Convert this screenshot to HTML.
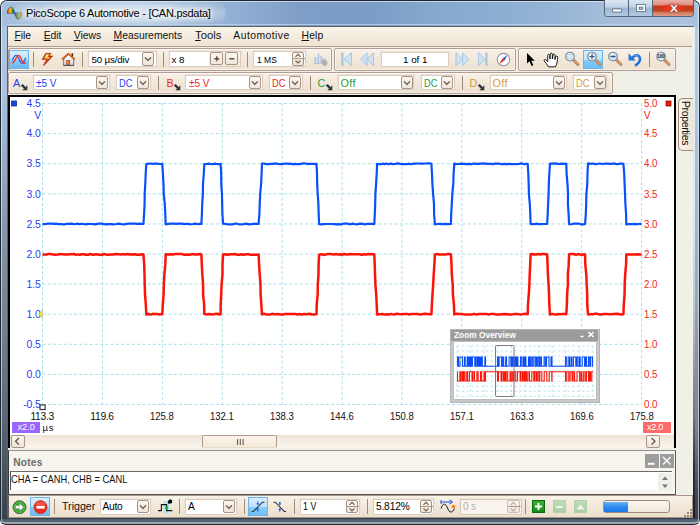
<!DOCTYPE html>
<html><head><meta charset="utf-8"><title>PicoScope 6 Automotive - [CAN.psdata]</title>
<style>
*{box-sizing:border-box;margin:0;padding:0}
html,body{width:700px;height:525px;overflow:hidden;background:#fff}
body{position:relative;font-family:"Liberation Sans",sans-serif;font-size:10.5px;color:#000}
.abs{position:absolute}
#win{position:absolute;left:0;top:0;width:700px;height:525px;border-radius:7px 7px 6px 6px;background:#1e2832;overflow:hidden}
#glass{position:absolute;left:1px;top:1px;width:698px;height:523px;border-radius:6px 6px 5px 5px;
 background:linear-gradient(90deg,#a4bedc 0px,#a9c2de 150px,#93b0d4 230px,#7e9ec7 300px,#7b9cc5 370px,#86a8ce 430px,#8eb0d3 520px,#a2bcd9 600px,#a9c3df 698px);}
#glassl{position:absolute;left:1px;top:26px;width:6px;height:498px;background:linear-gradient(180deg,#aec7e3 0px,#a9c2df 70px,#9ab0cb 120px,#90a3bc 160px,#8493a8 215px,#7a8899 260px,#6e7b8b 320px,#5e6a79 380px,#4e5967 430px,#3f4955 470px,#363f4c 498px)}
#glassr{position:absolute;left:693px;top:26px;width:6px;height:498px;background:linear-gradient(180deg,#b4cbe4 0px,#aac3df 100px,#9fb5d0 200px,#97a9bf 270px,#8894a4 330px,#7a8593 400px,#56616f 440px,#3e4854 470px,#363f4b 498px)}
#glassb{position:absolute;left:1px;top:518px;width:698px;height:6px;background:linear-gradient(180deg,#2a323c 0,#4e5c6c 25%,#5a6a7c 60%,#98a2ae 75%,#2c343e 90%,#1e2630 100%)}
#tbl{position:absolute;left:7px;top:24.200px;width:686px;height:1.300px;background:rgba(190,215,238,.75)}
#hl{position:absolute;left:1px;top:1px;width:698px;height:523px;border-radius:6px 6px 5px 5px;border:1px solid rgba(255,255,255,.55);pointer-events:none}
#title{position:absolute;left:26px;top:5px;font-size:11px;line-height:14px;white-space:nowrap;color:#000;text-shadow:0 0 5px #fff,0 0 6px #fff,0 0 8px #fff,0 0 10px rgba(255,255,255,.9)}
#inner{position:absolute;left:7px;top:26px;width:686.500px;height:492px;background:#f1f0e7;border:1px solid #5f5e60;border-right-color:#8a939e}
/* menu */
#menu{position:absolute;left:8px;top:27px;width:684px;height:19px;background:linear-gradient(180deg,#faf4ea,#f4ebdd 55%,#efe3d1)}
#menu span{position:absolute;top:3px;font-size:10.5px;line-height:13px;white-space:nowrap}
#menu u{text-decoration:underline;text-underline-offset:1px}
.tb{position:absolute;border:1.200px solid #b29c96;border-radius:2px;box-shadow:inset 0 0 0 1px rgba(255,255,255,.5);background:linear-gradient(180deg,#f8f1e7,#f2e8da 50%,#eee1cf)}
.sep{position:absolute;width:1px;background:#9d8c80}
.combo{position:absolute;background:#fff;border:1px solid #d9cdbf;box-shadow:0 0 0 1px #efe6d9}
.combo span{position:absolute;left:3px;top:1px;font-size:10.5px;line-height:13px;white-space:nowrap}
.dd{position:absolute;border:1px solid #a89486;border-radius:2px;background:linear-gradient(180deg,#fbf7f1,#efe5d7)}
.dd svg,.btn svg{position:absolute;left:0;top:0}
.t{position:absolute;white-space:nowrap;line-height:1}
.t u{text-decoration:underline;text-underline-offset:1px;text-decoration-thickness:1px}
#tglow{position:absolute;left:14px;top:2px;width:212px;height:22px;border-radius:11px;background:radial-gradient(ellipse at center,rgba(255,255,255,.62) 0,rgba(255,255,255,.45) 45%,rgba(255,255,255,.15) 75%,rgba(255,255,255,0) 100%)}
.sel{position:absolute;background:linear-gradient(180deg,#d8eefd 0,#bde2fb 50%,#86cbf8 56%,#6ebff6 100%);border:1px solid #6eb2ec}
.btn{position:absolute;border:1px solid #a89486;border-radius:2px;background:linear-gradient(180deg,#fbf7f1,#efe5d7)}
.chl{position:absolute;font-size:12px;line-height:13px}
.ax{position:absolute;font-size:10.5px;line-height:12px;white-space:nowrap}
.axl{color:#2a3cf0;text-align:right;width:30px;left:10px}
.axr{color:#f0281e;left:644px}
.axx{color:#111;text-align:center;width:40px}
</style></head><body>
<div id="win"><div id="glass"></div><div id="glassl"></div><div id="glassr"></div><div id="glassb"></div><div id="hl"></div>
<svg class="abs" style="left:6px;top:5px" width="17" height="16" viewBox="0 0 17 16">
 <defs><linearGradient id="rb" x1="0" x2="1"><stop offset="0" stop-color="#e02010"/><stop offset=".22" stop-color="#f0c020"/><stop offset=".4" stop-color="#30a030"/><stop offset=".55" stop-color="#2040c0"/><stop offset=".72" stop-color="#30a030"/><stop offset=".86" stop-color="#e0a020"/><stop offset="1" stop-color="#d03010"/></linearGradient></defs>
 <path d="M1,8.300 C1.500,2 6,-.5 7.800,5.500 L8.800,7.700 L15.500,7.700 C15.500,13 11.500,18.500 9.300,10.500 L8.300,8.300 Z" fill="url(#rb)" stroke="#4a5070" stroke-width=".6"/><path d="M7.300,5 L9.800,11" stroke="#2838a0" stroke-width="1.400"/>
</svg>
<div id="tbl"></div>
<div id="tglow"></div>
<span class="t" id="t0" style="left:26.1px;top:7.79px;font-size:11px;color:#000;font-weight:normal;letter-spacing:-0.268px;text-shadow:0 0 4px #fff,0 0 6px #fff,0 0 9px #fff">PicoScope 6 Automotive - [CAN.psdata]</span>
<div class="abs" style="left:604px;top:0;width:90px;height:17px;border:1px solid #54677c;border-top:none;border-radius:0 0 4px 4px;overflow:hidden;background:#b8cce2">
 <div class="abs" style="left:0;top:0;width:24px;height:16px;background:linear-gradient(180deg,#dbe6f2 0,#c0d2e5 45%,#9db6d0 50%,#b3c9e0 100%);border-right:1px solid #54677c"></div>
 <div class="abs" style="left:24px;top:0;width:24px;height:16px;background:linear-gradient(180deg,#dbe6f2 0,#c0d2e5 45%,#9db6d0 50%,#b3c9e0 100%);border-right:1px solid #54677c"></div>
 <div class="abs" style="left:48px;top:0;width:41px;height:16px;background:linear-gradient(180deg,#eab0a6 0,#e09084 30%,#c23a1c 38%,#c4401c 68%,#d27a5c 78%,#dc9a88 100%)"></div>
 <div class="abs" style="left:56px;top:3px;width:24px;height:10px;background:radial-gradient(ellipse at center,rgba(255,48,32,.95) 0,rgba(255,48,32,.6) 45%,rgba(255,48,32,0) 75%)"></div>
 <svg class="abs" style="left:0;top:0" width="89" height="16" viewBox="0 0 89 16">
  <rect x="7.500" y="9" width="9" height="3" fill="#fff" stroke="#5a6a7c" stroke-width=".8"/>
  <rect x="31.500" y="4.500" width="9" height="7" fill="#fff" stroke="#5a6a7c" stroke-width=".8"/><rect x="34" y="7" width="4" height="2.500" fill="#9cb4ce" stroke="#5a6a7c" stroke-width=".6"/>
  <path d="M64.500,4.500 l2.600,0 l1.900,2.300 l1.900,-2.300 l2.600,0 l-3.100,3.800 l3.300,4 l-2.700,0 l-2,-2.500 l-2,2.500 l-2.700,0 l3.300,-4 z" fill="#fff" stroke="#6a5a5a" stroke-width=".7"/>
 </svg>
</div>
<div id="inner"></div>
<div class="abs" style="left:693.300px;top:27px;width:1.600px;height:491px;background:linear-gradient(180deg,#e6eef6 0,#dde6f0 200px,#b4bcc6 300px,#6a727c 390px,#2a3038 440px,#1a2026 491px)"></div>
<div id="menu"></div>
<span class="t" id="t1" style="left:14.5px;top:31px;font-size:10.4px;color:#111;font-weight:normal;letter-spacing:-0.037px;"><u>F</u>ile</span>
<span class="t" id="t2" style="left:43.7px;top:31px;font-size:10.4px;color:#111;font-weight:normal;letter-spacing:-0.042px;"><u>E</u>dit</span>
<span class="t" id="t3" style="left:73.7px;top:31px;font-size:10.4px;color:#111;font-weight:normal;letter-spacing:-0.032px;"><u>V</u>iews</span>
<span class="t" id="t4" style="left:113.5px;top:31px;font-size:10.4px;color:#111;font-weight:normal;letter-spacing:-0.007px;"><u>M</u>easurements</span>
<span class="t" id="t5" style="left:194.5px;top:31px;font-size:10.4px;color:#111;font-weight:normal;letter-spacing:0px;transform:scaleX(1.088);transform-origin:0 0;"><u>T</u>ools</span>
<span class="t" id="t6" style="left:233.3px;top:31px;font-size:10.4px;color:#111;font-weight:normal;letter-spacing:0.435px;">Automotive</span>
<span class="t" id="t7" style="left:301.5px;top:31px;font-size:10.4px;color:#111;font-weight:normal;letter-spacing:0.131px;"><u>H</u>elp</span>
<div class="abs" style="left:8px;top:46px;width:684px;height:1px;background:#b09c8e"></div>
<div class="tb" style="left:7.5px;top:47.6px;width:324.7px;height:23.1px;"></div>
<div class="tb" style="left:334.2px;top:47.6px;width:181.8px;height:23.1px;"></div>
<div class="tb" style="left:518.2px;top:47.6px;width:157.8px;height:23.1px;"></div>
<div class="sel" style="left:9px;top:50px;width:20px;height:19px;"></div>
<svg class="abs" style="left:11px;top:52px" width="17" height="16" viewBox="0 0 17 16"><path d="M1.300,8.100 C2.500,5.500 3.800,3.300 5.200,3.300 C7.500,3.300 8.500,11.300 10.700,11.300 C12.500,11.300 13.500,8.500 14.800,5.800" fill="none" stroke="#2f62e6" stroke-width="1.350"/><path d="M1.300,11.300 C3.500,11 5.500,3.500 7.700,3.500 C10,3.500 11,11.300 13,11.300 C13.800,11.300 14.300,10.800 14.800,10.200" fill="none" stroke="#ee3a26" stroke-width="1.500"/><path d="M2,14.300 h13" stroke="#4a9ae8" stroke-width=".9" stroke-dasharray="1 1.600"/></svg>
<div class="sep" style="left:33px;top:52px;height:15px"></div>
<svg class="abs" style="left:41px;top:52px" width="13" height="15" viewBox="0 0 13 15"><path d="M4.600,1.300 L10.200,1.300 L8.300,3.900 L11.900,3.900 L3,13.600 L2.300,13.200 L5.600,7.600 L1,7.600 Z" fill="#bc3410" stroke="#b02c0c" stroke-width=".5" stroke-linejoin="round"/><path d="M5.200,2.300 L8.300,2.300 L6.500,4.900 L9.300,4.900 L6,8.200 L6.800,6.300 L3,6.500 Z" fill="#ffd630"/><path d="M5.400,2.800 L7,2.800 L5,5.600 Z" fill="#fff8d0"/></svg>
<svg class="abs" style="left:61px;top:52px" width="15" height="15" viewBox="0 0 15 15"><defs><linearGradient id="hw" x1="0" y1="0" x2="0" y2="1"><stop offset="0" stop-color="#fff"/><stop offset="1" stop-color="#cfdbe8"/></linearGradient></defs><rect x="10.500" y="1.200" width="1.600" height="4" fill="#4a2418"/><path d="M2.700,7 V13.400 H12.700 V7 L7.500,2.500 Z" fill="url(#hw)" stroke="#566070" stroke-width=".9"/><path d="M2.400,13.500 H13" stroke="#48525e" stroke-width="1.100"/><path d="M.9,7.300 L7.300,1.700 L13.800,7.300" fill="none" stroke="#e06a1c" stroke-width="1.700"/><path d="M.9,7.300 L7.300,1.700 L13.800,7.300" fill="none" stroke="#a82c10" stroke-width=".6" stroke-dasharray="1 1"/><rect x="5.700" y="8.400" width="3.100" height="4.300" fill="#f07818" stroke="#c03410" stroke-width=".6"/></svg>
<div class="sep" style="left:82px;top:52px;height:15px"></div>
<div class="combo" style="left:88px;top:51px;width:68.5px;height:16px;"></div><div class="dd" style="left:142.4px;top:52px;width:12px;height:14px;"><svg width="12" height="14"><path d="M2,4.5 l3,3 l3,-3" fill="none" stroke="#5b4a44" stroke-width="1.2"/></svg></div>
<span class="t" id="t8" style="left:91.5px;top:54.7px;font-size:9.8px;color:#000;font-weight:normal;letter-spacing:-0.19px;">50 &micro;s/div</span>
<div class="sep" style="left:163px;top:52px;height:15px"></div>
<div class="combo" style="left:169px;top:51px;width:72px;height:16px;"></div>
<span class="t" id="t9" style="left:171.5px;top:54.7px;font-size:9.8px;color:#000;font-weight:normal;letter-spacing:-0.089px;">x 8</span>
<div class="abs" style="left:208.5px;top:52px;width:31.7px;height:14px;background:linear-gradient(180deg,#f8f2e8,#f1e7d8)"></div>
<div class="btn" style="left:209.8px;top:52.4px;width:12.8px;height:13.1px;"><svg width="12" height="12"><path d="M3.600,6 h5 M6.100,3.500 v5" stroke="#5e4a46" stroke-width="1.400" fill="none" transform="translate(-.3,-.2)"/></svg></div>
<div class="btn" style="left:225.3px;top:52.4px;width:12.8px;height:13.1px;"><svg width="12" height="12"><path d="M3.600,6 h5" stroke="#5e4a46" stroke-width="1.400" fill="none" transform="translate(-.3,-.2)"/></svg></div>
<div class="sep" style="left:247px;top:52px;height:15px"></div>
<div class="combo" style="left:253px;top:51px;width:53px;height:16px;"></div>
<span class="t" id="t10" style="left:256.5px;top:54.7px;font-size:9.8px;color:#000;font-weight:normal;letter-spacing:0px;transform:scaleX(0.87);transform-origin:0 0;">1 MS</span>
<div class="dd" style="left:292.4px;top:52.4px;width:12px;height:13.2px;"><svg width="12" height="13.2"><path d="M0,5.6 h12" stroke="#a89486" stroke-width="1"/><path d="M2.5,3.9 l2.500,-2.500 l2.500,2.500 M2.5,7.5 l2.500,2.500 l2.500,-2.500" fill="none" stroke="#6b5a54" stroke-width="1.100"/></svg></div>
<svg class="abs" style="left:313px;top:52px" width="16" height="15" viewBox="0 0 16 15"><path d="M1,11.500 h9" stroke="#b8c8d8" stroke-width="1"/><rect x="1.500" y="5" width="1.800" height="6" fill="#a9c9ea"/><rect x="4.500" y="1.500" width="1.800" height="9.500" fill="#a9c9ea"/><rect x="7.500" y="4" width="1.800" height="7" fill="#a9c9ea"/><rect x="10.500" y="6" width="1.800" height="3" fill="#a9c9ea"/><path d="M8,9 l2,-1.500 l1,1 l1.500,-1 l1,1.500 l1,2 l-1,2.500 l-3.500,0 z" fill="#b4aca8" stroke="#c8c0bc" stroke-width=".5"/></svg>
<svg class="abs" style="left:340px;top:52px" width="36" height="15" viewBox="0 0 36 15"><rect x="1.200" y=".5" width="2.300" height="13.500" fill="#a6c8e6"/><path d="M11.500,.8 L4,7.200 L11.500,13.700 Z" fill="#cfe2f3" stroke="#a6c8e6" stroke-width="1"/><path d="M27,.8 L20.500,7.200 L27,13.700 Z M33.500,.8 L27,7.200 L33.500,13.700 Z" fill="#cfe2f3" stroke="#a6c8e6" stroke-width="1"/></svg>
<div class="combo" style="left:381px;top:51.5px;width:67.5px;height:15.5px;"></div>
<span class="t" id="t11" style="left:403.1px;top:54.7px;font-size:9.8px;color:#000;font-weight:normal;letter-spacing:-0.043px;">1 of 1</span>
<svg class="abs" style="left:455px;top:52px" width="36" height="15" viewBox="0 0 36 15"><path d="M1,.8 L7.500,7.200 L1,13.700 Z M7.500,.8 L14,7.200 L7.500,13.700 Z" fill="#cfe2f3" stroke="#a6c8e6" stroke-width="1"/><path d="M23.500,.8 L30,7.200 L23.500,13.700 Z" fill="#cfe2f3" stroke="#a6c8e6" stroke-width="1"/><rect x="30.300" y=".5" width="2.300" height="13.500" fill="#a6c8e6"/></svg>
<svg class="abs" style="left:496px;top:51.500px" width="15" height="15" viewBox="0 0 15 15"><circle cx="7.500" cy="7.500" r="6.200" fill="#fff" stroke="#8e99a6" stroke-width="1.150"/><path d="M11.500,3 L8.600,8.600 L6.400,6.400 Z" fill="#3a58e0"/><path d="M3.300,12 L6.400,6.400 L8.600,8.600 Z" fill="#f02818"/></svg>
<svg class="abs" style="left:526px;top:52px" width="10" height="15" viewBox="0 0 10 15"><path d="M1,1 L1,11.500 L3.500,9.300 L5.500,14 L7.300,13.200 L5.300,8.700 L8.800,8.700 Z" fill="#000"/></svg>
<svg class="abs" style="left:543px;top:51.500px" width="17" height="16" viewBox="0 0 17 16"><path d="M5.500,14.800 C4.500,12.500 2.500,10.500 1.200,9 C.6,8 1.800,7 2.800,7.800 L4.800,9.600 L4.600,3.500 C4.600,2 6.600,2 6.700,3.400 L7,7 L7.200,2.200 C7.300,.8 9.300,.8 9.300,2.200 L9.400,7 L10,2.900 C10.200,1.600 12,1.800 12,3.200 L11.900,7.600 L12.800,4.800 C13.200,3.600 14.800,4 14.700,5.200 C14.500,8 14.200,11.500 12.500,14.800 Z" fill="#fff" stroke="#000" stroke-width=".9" stroke-linejoin="round"/></svg>
<svg class="abs" style="left:564.3px;top:51.4px" width="17" height="16" viewBox="0 0 17 16"><path d="M9.300,8.900 L14,13.500" stroke="#90867e" stroke-width="2.900" stroke-linecap="round"/><path d="M9.800,9.300 L14,13.400" stroke="#f49444" stroke-width="1.500" stroke-linecap="round"/><circle cx="6" cy="5.600" r="4.300" fill="#d8ebfa" stroke="#8593a3" stroke-width="1.300"/><path d="M3.300,4.500 A3,3 0 0 1 6,2.600" fill="none" stroke="#fff" stroke-width="1.100"/><path d="M4,3.500 h3 v3.500 h-3 z" fill="#fff" stroke="#9ab8d8" stroke-width=".6"/></svg>
<div class="sel" style="left:583px;top:50px;width:20px;height:19px;"></div>
<svg class="abs" style="left:586px;top:51.4px" width="17" height="16" viewBox="0 0 17 16"><path d="M9.300,8.900 L14,13.500" stroke="#90867e" stroke-width="2.900" stroke-linecap="round"/><path d="M9.800,9.300 L14,13.400" stroke="#f49444" stroke-width="1.500" stroke-linecap="round"/><circle cx="6" cy="5.600" r="4.300" fill="#d8ebfa" stroke="#8593a3" stroke-width="1.300"/><path d="M3.300,4.500 A3,3 0 0 1 6,2.600" fill="none" stroke="#fff" stroke-width="1.100"/><path d="M3.500,5.500 h5 M6,3 v5" stroke="#33507a" stroke-width="1.200"/></svg>
<svg class="abs" style="left:606.6px;top:51.4px" width="17" height="16" viewBox="0 0 17 16"><path d="M9.300,8.900 L14,13.500" stroke="#90867e" stroke-width="2.900" stroke-linecap="round"/><path d="M9.800,9.300 L14,13.400" stroke="#f49444" stroke-width="1.500" stroke-linecap="round"/><circle cx="6" cy="5.600" r="4.300" fill="#d8ebfa" stroke="#8593a3" stroke-width="1.300"/><path d="M3.300,4.500 A3,3 0 0 1 6,2.600" fill="none" stroke="#fff" stroke-width="1.100"/><path d="M3.500,5.500 h5" stroke="#33507a" stroke-width="1.300"/></svg>
<svg class="abs" style="left:628px;top:52px" width="15" height="15" viewBox="0 0 15 15"><path d="M5,5.200 C6.800,2.600 10,2.600 11.500,4.800 C13.200,7.500 11.200,11.300 7.900,13.200" fill="none" stroke="#1f6fe2" stroke-width="2.500" stroke-linecap="round"/><path d="M.9,1.900 L.9,8.200 L7,8.200 Z" fill="#2a7ae8" stroke="#1c64d0" stroke-width=".5" stroke-linejoin="round"/><path d="M6,3.800 C8,2.600 10,3.200 10.800,4.600" fill="none" stroke="#7ab4f4" stroke-width=".8"/></svg>
<div class="sep" style="left:649px;top:52px;height:15px"></div>
<svg class="abs" style="left:655px;top:51.4px" width="17" height="16" viewBox="0 0 17 16"><path d="M9.300,8.900 L14,13.500" stroke="#90867e" stroke-width="2.900" stroke-linecap="round"/><path d="M9.800,9.300 L14,13.400" stroke="#f49444" stroke-width="1.500" stroke-linecap="round"/><circle cx="6" cy="5.600" r="4.300" fill="#d8ebfa" stroke="#8593a3" stroke-width="1.300"/><path d="M3.300,4.500 A3,3 0 0 1 6,2.600" fill="none" stroke="#fff" stroke-width="1.100"/><text x="6" y="7.300" font-size="4.500" font-weight="bold" text-anchor="middle" font-family="Liberation Sans,sans-serif" fill="#111">100</text></svg>
<div class="tb" style="left:7.5px;top:72.2px;width:605px;height:21.8px;"></div>
<span class="t" id="t12" style="left:13.1px;top:77.56px;font-size:10.8px;color:#2a3cf0;font-weight:normal;letter-spacing:0px;">A</span>
<svg class="abs" style="left:21px;top:83.500px" width="7" height="7" viewBox="0 0 7 7"><path d="M.8,.8 L4,4" stroke="#2c343c" stroke-width="2.300"/><path d="M6.300,1.300 V6.300 H1.300 Z" fill="#2c343c"/></svg>
<div class="combo" style="left:33.2px;top:74.6px;width:76.8px;height:15.6px;"></div><div class="dd" style="left:96px;top:75.6px;width:12px;height:13.6px;"><svg width="12" height="13.6"><path d="M2,4.3 l3,3 l3,-3" fill="none" stroke="#5b4a44" stroke-width="1.2"/></svg></div>
<span class="t" id="t13" style="left:36.1px;top:77.86px;font-size:10.8px;color:#2a3cf0;font-weight:normal;letter-spacing:0px;transform:scaleX(0.926);transform-origin:0 0;">&plusmn;5 V</span>
<div class="combo" style="left:116px;top:74.6px;width:35.4px;height:15.6px;"></div><div class="dd" style="left:137.4px;top:75.6px;width:12px;height:13.6px;"><svg width="12" height="13.6"><path d="M2,4.3 l3,3 l3,-3" fill="none" stroke="#5b4a44" stroke-width="1.2"/></svg></div>
<span class="t" id="t14" style="left:119.1px;top:78.03px;font-size:10.6px;color:#2a3cf0;font-weight:normal;letter-spacing:0px;transform:scaleX(0.869);transform-origin:0 0;">DC</span>
<div class="sep" style="left:157.6px;top:76px;height:14px"></div>
<span class="t" id="t15" style="left:166.5px;top:77.56px;font-size:10.8px;color:#f0281e;font-weight:normal;letter-spacing:0px;">B</span>
<svg class="abs" style="left:173.6px;top:83.500px" width="7" height="7" viewBox="0 0 7 7"><path d="M.8,.8 L4,4" stroke="#2c343c" stroke-width="2.300"/><path d="M6.300,1.300 V6.300 H1.300 Z" fill="#2c343c"/></svg>
<div class="combo" style="left:185px;top:74.6px;width:78px;height:15.6px;"></div><div class="dd" style="left:249px;top:75.6px;width:11.6px;height:13.6px;"><svg width="11.6" height="13.6"><path d="M1.8,4.3 l3,3 l3,-3" fill="none" stroke="#5b4a44" stroke-width="1.2"/></svg></div>
<span class="t" id="t16" style="left:189.1px;top:77.86px;font-size:10.8px;color:#f0281e;font-weight:normal;letter-spacing:0px;transform:scaleX(0.926);transform-origin:0 0;">&plusmn;5 V</span>
<div class="combo" style="left:268.6px;top:74.6px;width:34.8px;height:15.6px;"></div><div class="dd" style="left:289.4px;top:75.6px;width:12px;height:13.6px;"><svg width="12" height="13.6"><path d="M2,4.3 l3,3 l3,-3" fill="none" stroke="#5b4a44" stroke-width="1.2"/></svg></div>
<span class="t" id="t17" style="left:271.5px;top:78.03px;font-size:10.6px;color:#f0281e;font-weight:normal;letter-spacing:0px;transform:scaleX(0.869);transform-origin:0 0;">DC</span>
<div class="sep" style="left:310px;top:76px;height:14px"></div>
<span class="t" id="t18" style="left:317.5px;top:77.56px;font-size:10.8px;color:#2c9a3c;font-weight:normal;letter-spacing:0px;">C</span>
<svg class="abs" style="left:326px;top:83.500px" width="7" height="7" viewBox="0 0 7 7"><path d="M.8,.8 L4,4" stroke="#2c343c" stroke-width="2.300"/><path d="M6.300,1.300 V6.300 H1.300 Z" fill="#2c343c"/></svg>
<div class="combo" style="left:338px;top:74.6px;width:76px;height:15.6px;"></div><div class="dd" style="left:401px;top:75.6px;width:12px;height:13.6px;"><svg width="12" height="13.6"><path d="M2,4.3 l3,3 l3,-3" fill="none" stroke="#5b4a44" stroke-width="1.2"/></svg></div>
<span class="t" id="t19" style="left:340.5px;top:77.86px;font-size:10.8px;color:#2c9a3c;font-weight:normal;letter-spacing:0.348px;">Off</span>
<div class="combo" style="left:421px;top:74.6px;width:34px;height:15.6px;"></div><div class="dd" style="left:441.4px;top:75.6px;width:11.6px;height:13.6px;"><svg width="11.6" height="13.6"><path d="M1.8,4.3 l3,3 l3,-3" fill="none" stroke="#5b4a44" stroke-width="1.2"/></svg></div>
<span class="t" id="t20" style="left:423.9px;top:78.03px;font-size:10.6px;color:#2c9a3c;font-weight:normal;letter-spacing:0px;transform:scaleX(0.869);transform-origin:0 0;">DC</span>
<div class="sep" style="left:462.4px;top:76px;height:14px"></div>
<span class="t" id="t21" style="left:469.5px;top:77.56px;font-size:10.8px;color:#d49a3c;font-weight:normal;letter-spacing:0px;">D</span>
<svg class="abs" style="left:478px;top:83.500px" width="7" height="7" viewBox="0 0 7 7"><path d="M.8,.8 L4,4" stroke="#2c343c" stroke-width="2.300"/><path d="M6.300,1.300 V6.300 H1.300 Z" fill="#2c343c"/></svg>
<div class="combo" style="left:490px;top:74.6px;width:77px;height:15.6px;"></div><div class="dd" style="left:553.4px;top:75.6px;width:12px;height:13.6px;"><svg width="12" height="13.6"><path d="M2,4.3 l3,3 l3,-3" fill="none" stroke="#5b4a44" stroke-width="1.2"/></svg></div>
<span class="t" id="t22" style="left:492.5px;top:77.86px;font-size:10.8px;color:#d49a3c;font-weight:normal;letter-spacing:0.348px;">Off</span>
<div class="combo" style="left:573.2px;top:74.6px;width:34.2px;height:15.6px;"></div><div class="dd" style="left:593.6px;top:75.6px;width:12px;height:13.6px;"><svg width="12" height="13.6"><path d="M2,4.3 l3,3 l3,-3" fill="none" stroke="#5b4a44" stroke-width="1.2"/></svg></div>
<span class="t" id="t23" style="left:575.9px;top:78.03px;font-size:10.6px;color:#d49a3c;font-weight:normal;letter-spacing:0px;transform:scaleX(0.869);transform-origin:0 0;">DC</span>
<div class="abs" style="left:8px;top:94.500px;width:667.500px;height:353.500px;background:#000"></div>
<div class="abs" style="left:10px;top:96.800px;width:663.700px;height:338.200px;background:#fff"></div>
<svg class="abs" style="left:0;top:0" width="700" height="525" viewBox="0 0 700 525">
<g stroke="#a9deea" stroke-width="1" stroke-dasharray="3 2.250" fill="none">
<path d="M42.500,103.6 H641.600"/>
<path d="M42.500,133.69 H641.600"/>
<path d="M42.500,163.78 H641.600"/>
<path d="M42.500,193.87 H641.600"/>
<path d="M42.500,223.96 H641.600"/>
<path d="M42.500,254.05 H641.600"/>
<path d="M42.500,284.14 H641.600"/>
<path d="M42.500,314.23 H641.600"/>
<path d="M42.500,344.32 H641.600"/>
<path d="M42.500,374.41 H641.600"/>
<path d="M42.500,404.5 H641.600"/>
<path d="M42.5,103.200 V404.900"/>
<path d="M102.41,103.200 V404.900"/>
<path d="M162.32,103.200 V404.900"/>
<path d="M222.23,103.200 V404.900"/>
<path d="M282.14,103.200 V404.900"/>
<path d="M342.05,103.200 V404.900"/>
<path d="M401.96,103.200 V404.900"/>
<path d="M461.87,103.200 V404.900"/>
<path d="M521.78,103.200 V404.900"/>
<path d="M581.69,103.200 V404.900"/>
<path d="M641.6,103.200 V404.900"/>
</g>
<polyline points="42.5,223.8 44.2,224.1 45.8,224.0 47.9,223.6 50.1,223.6 52.3,223.6 53.9,223.9 56.7,223.7 58.5,224.1 61.4,224.1 63.5,224.4 65.1,224.3 67.0,223.7 68.7,223.8 71.4,223.7 73.8,224.1 75.9,224.0 77.5,223.6 79.3,224.2 81.4,223.8 83.8,224.0 85.7,224.3 88.3,223.8 90.6,224.0 93.5,224.2 95.4,224.4 97.1,223.9 99.7,223.7 101.9,223.6 104.4,224.2 106.8,224.3 108.8,224.2 111.2,224.1 113.3,224.3 116.3,224.0 118.8,223.6 121.3,224.1 124.3,224.3 126.2,223.9 128.7,223.6 130.9,223.7 132.6,223.6 135.2,223.7 137.1,223.9 139.9,223.6 142.1,224.0 143.4,224.0 144.1,214.0 144.6,203.9 144.7,193.9 145.3,183.9 145.7,173.8 146.3,164.1 149.2,163.5 151.0,163.6 152.9,163.8 155.2,163.6 156.7,163.7 158.8,163.9 161.7,164.0 162.3,163.8 162.9,173.8 163.5,183.9 163.7,193.9 164.8,203.9 165.3,214.0 165.7,224.3 168.4,223.9 170.5,223.6 172.9,223.6 174.5,223.7 176.3,223.9 177.9,223.6 179.6,223.6 181.6,223.6 184.5,224.1 186.2,223.8 188.2,223.9 189.9,224.3 192.9,224.0 195.1,223.6 196.8,223.9 198.6,224.3 200.4,223.6 201.4,224.0 201.9,214.0 202.2,203.9 202.9,193.9 203.0,183.9 203.8,173.8 204.3,164.2 207.1,164.0 209.0,163.7 210.7,164.0 213.0,164.1 215.0,163.6 217.7,164.2 220.5,164.1 220.6,163.8 221.2,173.8 221.3,183.9 221.9,193.9 222.2,203.9 222.4,214.0 223.1,223.6 225.0,223.8 227.6,224.4 229.7,224.4 232.7,224.4 234.8,223.7 236.6,223.7 238.4,224.1 241.3,224.3 243.5,224.1 246.2,223.6 248.7,224.4 251.3,224.2 253.6,223.7 256.2,223.8 258.6,224.0 259.4,214.0 259.7,203.9 260.2,193.9 261.1,183.9 261.6,173.8 262.0,163.5 263.7,163.5 266.5,164.1 268.3,164.1 271.2,163.9 273.3,163.8 275.0,163.4 277.9,163.9 280.2,164.2 282.4,164.1 285.1,163.5 287.0,163.6 288.8,163.9 290.7,163.7 292.4,164.2 294.5,163.8 296.8,164.2 299.0,164.2 301.2,163.8 303.5,163.4 305.7,163.5 307.2,164.1 308.9,163.8 311.5,163.9 313.5,163.8 315.8,164.1 316.5,163.8 317.0,173.8 317.2,183.9 317.7,193.9 318.4,203.9 318.7,214.0 319.1,224.1 321.7,224.4 323.9,224.1 326.2,224.0 328.7,224.0 331.0,224.0 333.9,224.2 336.7,224.4 338.6,224.1 341.5,224.3 343.2,223.7 345.4,223.6 347.3,223.6 349.8,224.3 352.6,223.7 355.2,224.1 356.9,224.3 359.9,223.7 362.8,223.9 365.0,224.4 367.8,223.7 369.9,224.0 371.9,223.7 373.9,224.2 374.3,224.0 374.8,214.0 375.2,203.9 375.4,193.9 376.1,183.9 376.7,173.8 377.1,163.8 378.7,164.2 381.4,164.2 383.0,163.6 384.6,164.1 386.5,163.5 388.6,164.2 391.4,163.6 393.1,164.2 395.4,164.0 397.1,163.4 399.6,163.7 401.2,164.2 403.7,164.1 405.3,164.1 406.9,164.1 409.1,163.7 411.4,164.2 413.3,163.5 415.6,163.6 417.3,163.5 418.8,163.5 420.8,163.6 423.4,163.6 425.7,163.5 427.7,163.4 429.6,163.4 431.4,163.8 432.0,173.8 432.4,183.9 433.1,193.9 434.0,203.9 434.1,214.0 434.9,224.3 437.0,224.0 439.8,223.9 442.1,224.2 445.0,223.9 447.8,224.2 450.2,223.9 450.9,224.0 451.2,214.0 451.8,203.9 452.3,193.9 453.3,183.9 453.6,173.8 454.3,163.5 455.9,164.1 458.7,164.0 460.7,163.6 462.6,163.8 464.3,163.8 466.2,164.2 469.2,163.8 471.1,164.2 473.0,163.7 474.5,163.7 476.7,163.8 478.5,163.8 480.0,163.6 481.7,163.7 483.2,163.4 485.2,163.6 487.6,163.8 490.2,163.9 492.8,164.1 494.9,163.6 497.8,163.5 500.4,163.9 502.0,164.1 504.8,163.9 507.4,164.1 509.1,163.8 511.4,164.1 514.1,164.1 516.5,164.2 519.0,164.0 520.8,163.4 522.5,163.7 524.2,164.1 526.5,163.9 527.7,163.8 528.3,173.8 528.7,183.9 528.9,193.9 529.8,203.9 530.3,214.0 530.6,224.0 532.9,224.1 534.5,224.2 536.4,223.6 538.3,224.2 540.1,224.2 543.0,224.0 545.1,224.0 547.1,224.0 547.7,214.0 548.1,203.9 548.6,193.9 548.8,183.9 549.3,173.8 550.0,163.6 552.6,163.6 555.0,163.4 556.6,163.6 559.1,164.0 561.6,163.6 563.9,163.8 566.1,163.5 566.3,163.8 566.6,173.8 567.5,183.9 568.0,193.9 567.9,203.9 568.6,214.0 569.1,224.3 572.1,224.0 574.0,223.7 576.9,223.7 579.2,223.7 581.5,224.4 583.2,224.3 585.1,224.0 585.8,214.0 586.2,203.9 586.4,193.9 587.3,183.9 587.5,173.8 588.0,163.4 589.5,163.8 591.7,163.6 593.4,163.7 595.4,164.1 596.9,164.0 599.6,163.5 602.5,164.0 605.4,163.6 607.4,163.7 610.4,163.9 612.5,163.7 614.4,163.4 616.0,164.1 618.0,164.2 619.8,163.6 622.1,163.5 623.4,163.8 624.2,173.8 624.6,183.9 625.0,193.9 625.4,203.9 626.1,214.0 626.3,224.4 628.6,224.2 630.2,224.2 632.4,224.2 634.8,223.8 636.4,224.4 638.1,224.0 640.1,223.8 641.6,224.0" fill="none" stroke="#0850fa" stroke-width="2.200" stroke-linejoin="round"/>
<polyline points="42.5,254.8 44.4,254.5 46.3,254.5 48.4,254.1 50.2,254.1 53.0,254.4 54.9,254.8 57.9,254.4 59.6,254.1 61.2,254.3 62.8,254.2 64.7,254.5 67.6,254.6 69.7,254.3 72.0,254.3 74.0,254.0 75.9,254.8 77.6,254.4 80.0,254.7 81.8,254.2 83.7,254.3 85.9,254.8 88.7,254.7 90.2,254.0 92.8,254.8 95.0,254.5 96.5,254.3 99.4,254.7 102.1,254.8 104.0,254.0 105.7,254.4 108.3,254.8 110.9,254.5 113.5,254.4 115.8,254.0 118.5,254.2 121.4,254.5 123.3,254.1 125.2,254.5 127.8,254.1 129.4,254.4 131.7,254.3 133.6,254.5 135.1,254.2 137.3,254.8 139.7,254.7 142.0,254.2 143.4,254.4 144.2,264.4 144.5,274.3 144.7,284.3 145.0,294.3 145.8,304.2 146.3,314.4 148.4,314.0 150.9,314.6 152.8,313.8 154.8,314.1 157.3,313.9 160.0,314.4 162.3,313.9 162.3,314.2 162.8,304.2 163.6,294.3 163.8,284.3 164.4,274.3 165.3,264.4 165.7,254.2 168.6,254.4 170.4,254.2 172.5,254.5 175.5,254.1 177.5,254.1 180.5,254.1 182.1,254.0 184.2,254.8 187.0,254.6 190.0,254.8 192.0,254.1 194.9,254.6 196.4,254.5 198.5,254.3 200.5,254.1 201.4,254.4 201.8,264.4 202.3,274.3 203.1,284.3 203.1,294.3 204.1,304.2 204.3,313.9 206.3,314.5 209.1,314.1 210.6,314.2 212.7,314.6 214.5,314.1 217.3,313.8 219.5,314.5 220.6,314.2 220.7,304.2 221.2,294.3 221.6,284.3 222.5,274.3 222.5,264.4 223.1,254.6 225.9,254.3 227.9,254.8 230.3,254.2 232.9,254.2 234.8,254.0 237.4,254.8 239.9,254.8 241.4,254.2 243.6,254.8 246.5,254.3 248.4,254.3 250.7,254.8 252.4,254.7 255.0,254.7 257.7,254.5 258.6,254.4 259.1,264.4 259.7,274.3 260.5,284.3 260.6,294.3 261.3,304.2 262.0,314.4 263.9,313.8 265.4,314.2 267.4,314.6 270.2,314.6 272.1,313.8 273.8,314.2 276.3,314.2 278.2,314.1 280.6,314.4 283.2,314.5 285.7,313.9 288.5,314.0 290.9,314.1 293.5,313.9 295.3,314.0 297.1,314.5 299.4,314.0 301.5,314.6 303.8,314.0 306.5,314.3 309.5,313.8 311.7,314.5 314.5,314.6 316.0,314.0 316.5,314.2 316.7,304.2 317.7,294.3 317.8,284.3 318.5,274.3 318.6,264.4 319.1,254.7 321.3,254.2 323.9,254.8 325.6,254.5 328.0,254.1 330.1,254.1 331.9,254.2 334.3,254.5 336.1,254.0 338.1,254.6 339.9,254.2 341.7,254.7 344.0,254.0 345.6,254.3 348.0,254.5 349.6,254.1 352.1,254.3 354.1,254.2 357.0,254.2 359.3,254.3 361.5,254.7 364.5,254.3 366.3,254.6 368.1,254.0 370.9,254.3 373.7,254.3 374.3,254.4 374.7,264.4 375.0,274.3 375.4,284.3 376.2,294.3 376.7,304.2 377.1,314.6 378.7,314.3 380.8,314.2 382.5,314.0 384.8,314.6 386.5,314.2 389.2,314.6 391.0,313.9 393.9,314.6 396.1,313.8 399.0,314.1 401.8,314.3 404.6,313.9 407.3,313.9 409.4,314.5 412.1,313.9 413.9,314.1 416.2,314.1 417.9,314.0 420.5,314.6 422.0,314.3 424.7,313.8 427.4,313.9 429.8,314.2 431.4,314.2 431.9,304.2 432.5,294.3 433.2,284.3 433.7,274.3 434.4,264.4 434.9,254.4 437.1,254.0 439.5,254.4 441.3,254.6 444.0,254.4 445.8,254.4 447.4,254.1 449.6,254.0 450.9,254.4 451.5,264.4 451.8,274.3 452.7,284.3 452.9,294.3 453.9,304.2 454.3,314.4 456.6,313.8 458.8,314.1 461.7,313.9 464.5,314.6 467.1,314.5 468.9,314.6 471.2,314.6 474.0,313.9 476.7,314.6 478.3,314.1 481.0,313.9 483.8,314.0 486.5,313.9 488.8,314.6 490.6,314.0 492.8,314.0 494.4,313.9 496.1,314.6 498.7,314.6 500.4,314.5 502.1,314.2 504.5,314.1 507.4,314.2 509.7,314.5 511.4,314.6 513.8,314.1 516.5,314.0 519.5,314.3 521.5,314.4 523.7,313.9 526.3,313.8 527.7,314.2 528.0,304.2 528.8,294.3 529.4,284.3 529.7,274.3 530.2,264.4 530.6,254.2 532.1,254.0 533.8,254.5 536.0,254.4 538.8,254.1 540.7,254.5 542.2,254.0 544.2,254.0 546.3,254.2 547.1,254.4 547.6,264.4 547.9,274.3 548.6,284.3 549.0,294.3 549.3,304.2 550.0,314.6 551.9,313.9 553.5,314.3 556.3,314.5 558.4,314.0 559.9,314.3 562.3,314.1 564.7,314.1 566.3,314.2 566.9,304.2 567.1,294.3 567.9,284.3 567.9,274.3 568.7,264.4 569.1,254.3 571.0,254.0 573.6,254.0 576.0,254.8 577.7,254.1 580.1,254.4 582.5,254.7 584.3,254.2 585.1,254.4 585.3,264.4 586.3,274.3 586.7,284.3 587.2,294.3 587.2,304.2 588.0,314.5 590.6,314.2 593.2,314.2 595.1,313.8 596.9,313.8 598.9,314.4 601.5,314.5 604.0,314.0 606.4,314.1 609.0,314.2 610.9,314.3 613.9,313.9 616.7,313.8 618.6,314.0 621.2,314.6 623.4,314.2 623.8,304.2 624.6,294.3 624.7,284.3 625.2,274.3 626.1,264.4 626.3,254.5 628.8,254.5 631.8,254.4 634.6,254.6 637.4,254.3 639.9,254.5 641.6,254.4" fill="none" stroke="#fb1408" stroke-width="2.500" stroke-linejoin="round"/>

<rect x="40" y="404.900" width="5.100" height="4.600" fill="#fff" stroke="#3a3a3a" stroke-width="1.200"/>
<rect x="11.500" y="101" width="5" height="5" fill="#1848e8" stroke="#0a2890" stroke-width=".8"/>
<rect x="666" y="101" width="5" height="5" fill="#f01808" stroke="#900a04" stroke-width=".8"/>
</svg>
<span class="t" id="t24" style="left:26.5px;top:99.3px;font-size:10.4px;color:#2a3cf0;font-weight:normal;letter-spacing:-0.127px;">4.5</span>
<span class="t" id="t25" style="left:643.8px;top:99.3px;font-size:10.4px;color:#f0281e;font-weight:normal;letter-spacing:0px;transform:scaleX(0.934);transform-origin:0 0;">5.0</span>
<span class="t" id="t26" style="left:26.5px;top:129.39px;font-size:10.4px;color:#2a3cf0;font-weight:normal;letter-spacing:-0.127px;">4.0</span>
<span class="t" id="t27" style="left:643.8px;top:129.39px;font-size:10.4px;color:#f0281e;font-weight:normal;letter-spacing:0px;transform:scaleX(0.934);transform-origin:0 0;">4.5</span>
<span class="t" id="t28" style="left:26.5px;top:159.48px;font-size:10.4px;color:#2a3cf0;font-weight:normal;letter-spacing:-0.127px;">3.5</span>
<span class="t" id="t29" style="left:643.8px;top:159.48px;font-size:10.4px;color:#f0281e;font-weight:normal;letter-spacing:0px;transform:scaleX(0.934);transform-origin:0 0;">4.0</span>
<span class="t" id="t30" style="left:26.5px;top:189.57px;font-size:10.4px;color:#2a3cf0;font-weight:normal;letter-spacing:-0.127px;">3.0</span>
<span class="t" id="t31" style="left:643.8px;top:189.57px;font-size:10.4px;color:#f0281e;font-weight:normal;letter-spacing:0px;transform:scaleX(0.934);transform-origin:0 0;">3.5</span>
<span class="t" id="t32" style="left:26.5px;top:219.66px;font-size:10.4px;color:#2a3cf0;font-weight:normal;letter-spacing:-0.127px;">2.5</span>
<span class="t" id="t33" style="left:643.8px;top:219.66px;font-size:10.4px;color:#f0281e;font-weight:normal;letter-spacing:0px;transform:scaleX(0.934);transform-origin:0 0;">3.0</span>
<span class="t" id="t34" style="left:26.5px;top:249.75px;font-size:10.4px;color:#2a3cf0;font-weight:normal;letter-spacing:-0.127px;">2.0</span>
<span class="t" id="t35" style="left:643.8px;top:249.75px;font-size:10.4px;color:#f0281e;font-weight:normal;letter-spacing:0px;transform:scaleX(0.934);transform-origin:0 0;">2.5</span>
<span class="t" id="t36" style="left:26.5px;top:279.84px;font-size:10.4px;color:#2a3cf0;font-weight:normal;letter-spacing:-0.127px;">1.5</span>
<span class="t" id="t37" style="left:643.8px;top:279.84px;font-size:10.4px;color:#f0281e;font-weight:normal;letter-spacing:0px;transform:scaleX(0.934);transform-origin:0 0;">2.0</span>
<span class="t" id="t38" style="left:26.5px;top:309.93px;font-size:10.4px;color:#2a3cf0;font-weight:normal;letter-spacing:-0.127px;">1.0</span>
<span class="t" id="t39" style="left:643.8px;top:309.93px;font-size:10.4px;color:#f0281e;font-weight:normal;letter-spacing:0px;transform:scaleX(0.934);transform-origin:0 0;">1.5</span>
<span class="t" id="t40" style="left:26.5px;top:340.02px;font-size:10.4px;color:#2a3cf0;font-weight:normal;letter-spacing:-0.127px;">0.5</span>
<span class="t" id="t41" style="left:643.8px;top:340.02px;font-size:10.4px;color:#f0281e;font-weight:normal;letter-spacing:0px;transform:scaleX(0.934);transform-origin:0 0;">1.0</span>
<span class="t" id="t42" style="left:26.5px;top:370.11px;font-size:10.4px;color:#2a3cf0;font-weight:normal;letter-spacing:-0.127px;">0.0</span>
<span class="t" id="t43" style="left:643.8px;top:370.11px;font-size:10.4px;color:#f0281e;font-weight:normal;letter-spacing:0px;transform:scaleX(0.934);transform-origin:0 0;">0.5</span>
<span class="t" id="t44" style="left:23.2px;top:400.2px;font-size:10.4px;color:#2a3cf0;font-weight:normal;letter-spacing:-0.135px;">-0.5</span>
<span class="t" id="t45" style="left:643.8px;top:400.2px;font-size:10.4px;color:#f0281e;font-weight:normal;letter-spacing:0px;transform:scaleX(0.934);transform-origin:0 0;">0.0</span>
<svg class="abs" style="left:37px;top:308px" width="8" height="12" viewBox="0 0 8 12"><path d="M1.600,6.300 L5.200,2.300 L5.200,10.300 Z" fill="#f6ea14" stroke="#a8a470" stroke-width=".5"/></svg>
<span class="t" id="t46" style="left:34.3px;top:110.8px;font-size:10.4px;color:#2a3cf0;font-weight:normal;letter-spacing:0px;">V</span>
<span class="t" id="t47" style="left:643.8px;top:110.8px;font-size:10.4px;color:#f0281e;font-weight:normal;letter-spacing:0px;">V</span>
<span class="t" id="t48" style="left:30.4px;top:411.88px;font-size:10.3px;color:#111;font-weight:normal;letter-spacing:-0.304px;">113.3</span>
<span class="t" id="t49" style="left:90.31px;top:411.88px;font-size:10.3px;color:#111;font-weight:normal;letter-spacing:-0.304px;">119.6</span>
<span class="t" id="t50" style="left:150.22px;top:411.88px;font-size:10.3px;color:#111;font-weight:normal;letter-spacing:0px;transform:scaleX(0.923);transform-origin:0 0;">125.8</span>
<span class="t" id="t51" style="left:210.13px;top:411.88px;font-size:10.3px;color:#111;font-weight:normal;letter-spacing:0px;transform:scaleX(0.923);transform-origin:0 0;">132.1</span>
<span class="t" id="t52" style="left:270.04px;top:411.88px;font-size:10.3px;color:#111;font-weight:normal;letter-spacing:0px;transform:scaleX(0.923);transform-origin:0 0;">138.3</span>
<span class="t" id="t53" style="left:329.95px;top:411.88px;font-size:10.3px;color:#111;font-weight:normal;letter-spacing:0px;transform:scaleX(0.923);transform-origin:0 0;">144.6</span>
<span class="t" id="t54" style="left:389.86px;top:411.88px;font-size:10.3px;color:#111;font-weight:normal;letter-spacing:0px;transform:scaleX(0.923);transform-origin:0 0;">150.8</span>
<span class="t" id="t55" style="left:449.77px;top:411.88px;font-size:10.3px;color:#111;font-weight:normal;letter-spacing:0px;transform:scaleX(0.923);transform-origin:0 0;">157.1</span>
<span class="t" id="t56" style="left:509.68px;top:411.88px;font-size:10.3px;color:#111;font-weight:normal;letter-spacing:0px;transform:scaleX(0.923);transform-origin:0 0;">163.3</span>
<span class="t" id="t57" style="left:569.59px;top:411.88px;font-size:10.3px;color:#111;font-weight:normal;letter-spacing:0px;transform:scaleX(0.923);transform-origin:0 0;">169.6</span>
<span class="t" id="t58" style="left:629.5px;top:411.88px;font-size:10.3px;color:#111;font-weight:normal;letter-spacing:0px;transform:scaleX(0.923);transform-origin:0 0;">175.8</span>
<div class="abs" style="left:11.5px;top:421.5px;width:28.5px;height:11px;background:#9966ff"></div>
<span class="t" id="t59" style="left:17.5px;top:422.71px;font-size:9.2px;color:#fff;font-weight:normal;letter-spacing:0.008px;">x2.0</span>
<span class="t" id="t60" style="left:42.5px;top:422.56px;font-size:9.5px;color:#111;font-weight:normal;letter-spacing:0.666px;">&micro;s</span>
<div class="abs" style="left:642.5px;top:421.5px;width:28px;height:11px;background:#ff6a6a"></div>
<span class="t" id="t61" style="left:647px;top:422.71px;font-size:9.2px;color:#fff;font-weight:normal;letter-spacing:-0.325px;">x2.0</span>
<div class="abs" style="left:10px;top:435px;width:663.700px;height:13px;background:linear-gradient(180deg,#ece2d2,#f3ebdf 35%,#f9f5ee)"></div>
<div class="btn" style="left:11px;top:435px;width:13.5px;height:13px;"><svg width="12" height="11"><path d="M7,2 L3.500,5.300 L7,8.600" fill="none" stroke="#5b4a44" stroke-width="1.200"/></svg></div>
<div class="btn" style="left:646px;top:435px;width:13.5px;height:13px;"><svg width="12" height="11"><path d="M4.500,2 L8,5.300 L4.500,8.600" fill="none" stroke="#5b4a44" stroke-width="1.200"/></svg></div>
<div class="btn" style="left:202px;top:434.8px;width:75px;height:13.2px;border-color:#b09a8e;border-bottom-color:#e6dacb;background:linear-gradient(180deg,#f9f4ec,#f3e9da)"><svg width="74" height="12"><path d="M34.500,3 v6 M37.300,3 v6 M40.100,3 v6" stroke="#6a5a56" stroke-width="1.100"/></svg></div>
<div class="abs" style="left:449.500px;top:328.500px;width:150px;height:74.500px;background:#c9c9c9;border:1px solid #b4b4b4"></div>
<div class="abs" style="left:451px;top:330px;width:147px;height:10.500px;background:#9c9c9c"></div>
<span class="t" id="t62" style="left:453.5px;top:330.98px;font-size:9px;color:#fff;font-weight:bold;letter-spacing:0px;transform:scaleX(0.923);transform-origin:0 0;">Zoom Overview</span>
<div class="abs" style="left:452.500px;top:340.500px;width:144px;height:59.500px;background:#fff;border:1px solid #bdbdbd"></div>
<svg class="abs" style="left:0;top:0" width="700" height="525" viewBox="0 0 700 525">
<g stroke="#b6e3ee" stroke-width=".9" stroke-dasharray="2.500 2.300" fill="none">
<path d="M457,345.9 H593"/>
<path d="M457,350.95 H593"/>
<path d="M457,356 H593"/>
<path d="M457,361.05 H593"/>
<path d="M457,366.1 H593"/>
<path d="M457,371.15 H593"/>
<path d="M457,376.2 H593"/>
<path d="M457,381.25 H593"/>
<path d="M457,386.3 H593"/>
<path d="M457,391.35 H593"/>
<path d="M457,396.4 H593"/>
<path d="M457,346 V396.500"/>
<path d="M470.6,346 V396.500"/>
<path d="M484.2,346 V396.500"/>
<path d="M497.8,346 V396.500"/>
<path d="M511.4,346 V396.500"/>
<path d="M525,346 V396.500"/>
<path d="M538.6,346 V396.500"/>
<path d="M552.2,346 V396.500"/>
<path d="M565.8,346 V396.500"/>
<path d="M579.4,346 V396.500"/>
<path d="M593,346 V396.500"/>
</g>
<polyline points="457.5,366.3 457.5,366.3 457.5,357.0 458.5,357.0 458.5,366.3 460.0,366.3 460.0,357.0 462.4,357.0 462.4,366.3 464.4,366.3 464.4,357.0 465.2,357.0 465.2,366.3 467.2,366.3 467.2,357.0 468.2,357.0 468.2,366.3 469.2,366.3 469.2,357.0 470.0,357.0 470.0,366.3 470.8,366.3 470.8,357.0 471.6,357.0 471.6,366.3 472.4,366.3 472.4,357.0 474.8,357.0 474.8,366.3 475.8,366.3 475.8,357.0 477.1,357.0 477.1,366.3 478.1,366.3 478.1,357.0 478.9,357.0 478.9,366.3 479.7,366.3 479.7,357.0 480.5,357.0 480.5,366.3 481.5,366.3 481.5,357.0 482.3,357.0 482.3,366.3 484.9,366.3 484.9,357.0 485.5,357.0 485.5,366.3 497.5,366.3 497.5,357.0 498.3,357.0 498.3,366.3 499.1,366.3 499.1,357.0 501.5,357.0 501.5,366.3 502.7,366.3 502.7,357.0 503.7,357.0 503.7,366.3 505.7,366.3 505.7,357.0 506.5,357.0 506.5,366.3 509.1,366.3 509.1,357.0 510.9,357.0 510.9,366.3 511.7,366.3 511.7,357.0 512.7,357.0 512.7,366.3 513.7,366.3 513.7,357.0 514.7,357.0 514.7,366.3 515.5,366.3 515.5,357.0 516.3,357.0 516.3,366.3 517.1,366.3 517.1,357.0 517.9,357.0 517.9,366.3 520.5,366.3 520.5,357.0 521.8,357.0 521.8,366.3 523.3,366.3 523.3,357.0 524.1,357.0 524.1,366.3 525.1,366.3 525.1,357.0 525.9,357.0 525.9,366.3 528.5,366.3 528.5,357.0 529.5,357.0 529.5,366.3 530.7,366.3 530.7,357.0 532.0,357.0 532.0,366.3 533.2,366.3 533.2,357.0 535.0,357.0 535.0,366.3 536.2,366.3 536.2,357.0 537.0,357.0 537.0,366.3 538.2,366.3 538.2,357.0 539.5,357.0 539.5,366.3 540.7,366.3 540.7,357.0 541.5,357.0 541.5,366.3 544.1,366.3 544.1,357.0 545.4,357.0 545.4,366.3 546.6,366.3 546.6,357.0 549.0,357.0 549.0,366.3 551.0,366.3 551.0,357.0 552.0,357.0 552.0,366.3 565.5,366.3 565.5,357.0 566.8,357.0 566.8,366.3 568.8,366.3 568.8,357.0 569.6,357.0 569.6,366.3 571.1,366.3 571.1,357.0 571.9,357.0 571.9,366.3 573.4,366.3 573.4,357.0 575.8,357.0 575.8,366.3 576.6,366.3 576.6,357.0 577.9,357.0 577.9,366.3 579.4,366.3 579.4,357.0 580.2,357.0 580.2,366.3 582.2,366.3 582.2,357.0 584.6,357.0 584.6,366.3 585.6,366.3 585.6,357.0 586.4,357.0 586.4,366.3 588.4,366.3 588.4,357.0 589.7,357.0 589.7,366.3 590.7,366.3 590.7,357.0 592.5,357.0 592.5,366.3 593.0,366.3 593.0,366.3 593.0,366.3" fill="none" stroke="#0a4cf5" stroke-width="1.100"/>
<polyline points="457.5,371.8 457.5,371.8 457.5,381.0 459.9,381.0 459.9,371.8 460.9,371.8 460.9,381.0 462.2,381.0 462.2,371.8 463.0,371.8 463.0,381.0 463.8,381.0 463.8,371.8 465.0,371.8 465.0,381.0 466.8,381.0 466.8,371.8 467.6,371.8 467.6,381.0 469.4,381.0 469.4,371.8 472.0,371.8 472.0,381.0 473.0,381.0 473.0,371.8 474.5,371.8 474.5,381.0 476.9,381.0 476.9,371.8 478.1,371.8 478.1,381.0 480.5,381.0 480.5,371.8 481.7,371.8 481.7,381.0 484.1,381.0 484.1,371.8 485.1,371.8 485.1,381.0 485.5,381.0 485.5,371.8 497.5,371.8 497.5,381.0 498.5,381.0 498.5,371.8 501.1,371.8 501.1,381.0 502.1,381.0 502.1,371.8 503.6,371.8 503.6,381.0 504.6,381.0 504.6,371.8 505.4,371.8 505.4,381.0 506.2,381.0 506.2,371.8 507.7,371.8 507.7,381.0 510.1,381.0 510.1,371.8 510.9,371.8 510.9,381.0 512.2,381.0 512.2,371.8 513.4,371.8 513.4,381.0 514.2,381.0 514.2,371.8 515.7,371.8 515.7,381.0 517.5,381.0 517.5,371.8 520.1,371.8 520.1,381.0 520.9,381.0 520.9,371.8 522.4,371.8 522.4,381.0 523.2,381.0 523.2,371.8 524.4,371.8 524.4,381.0 525.4,381.0 525.4,371.8 526.6,371.8 526.6,381.0 527.9,381.0 527.9,371.8 529.4,371.8 529.4,381.0 531.8,381.0 531.8,371.8 533.8,371.8 533.8,381.0 534.8,381.0 534.8,371.8 536.3,371.8 536.3,381.0 537.3,381.0 537.3,371.8 538.8,371.8 538.8,381.0 539.8,381.0 539.8,371.8 541.8,371.8 541.8,381.0 544.2,381.0 544.2,371.8 546.8,371.8 546.8,381.0 549.2,381.0 549.2,371.8 551.8,371.8 551.8,381.0 552.0,381.0 552.0,371.8 565.5,371.8 565.5,381.0 566.8,381.0 566.8,371.8 568.8,371.8 568.8,381.0 570.1,381.0 570.1,371.8 572.1,371.8 572.1,381.0 573.1,381.0 573.1,371.8 574.6,371.8 574.6,381.0 577.0,381.0 577.0,371.8 579.6,371.8 579.6,381.0 580.9,381.0 580.9,371.8 581.9,371.8 581.9,381.0 583.7,381.0 583.7,371.8 585.2,371.8 585.2,381.0 586.5,381.0 586.5,371.8 588.5,371.8 588.5,381.0 589.5,381.0 589.5,371.8 590.5,371.8 590.5,381.0 591.8,381.0 591.8,371.8 593.0,371.8 593.0,371.8 593.0,371.8" fill="none" stroke="#fb1408" stroke-width="1.100"/>
<rect x="495.500" y="345.500" width="18.500" height="51" fill="none" stroke="#7c7c7c" stroke-width="1" rx="1"/>
<path d="M459.500,358.500 l3,1.500 l-3,1.500 z" fill="#f0e020"/>
<path d="M580.500,336.500 h3" stroke="#fff" stroke-width="1.500"/><path d="M588.500,332 l5,5 M593.500,332 l-5,5" stroke="#fff" stroke-width="1.500"/>
</svg>
<div class="abs" style="left:678px;top:97.500px;width:15px;height:53px;border:1px solid #a08a7c;border-right:none;border-radius:5px 0 0 5px;background:linear-gradient(90deg,#f9f4ec,#efe4d3)"></div>
<span class="t" id="t63" style="left:100.5px;top:-8.8px;font-size:10.4px;color:#111;font-weight:normal;letter-spacing:-0.318px;writing-mode:vertical-rl;left:680px;top:101px;line-height:10.400px">Properties</span>
<div class="abs" style="left:7.500px;top:450px;width:668.700px;height:44.800px;background:#f6f4ec;border:1.800px solid #5c5c5c;border-top:1.600px solid #909090;border-left:1.600px solid #3a3a3a;border-bottom-color:#555"></div>
<span class="t" id="t64" style="left:13.3px;top:457.57px;font-size:10.2px;color:#6c6c6c;font-weight:bold;letter-spacing:0.197px;">Notes</span>
<div class="abs" style="left:645px;top:454.3px;width:13.6px;height:13.7px;background:#9c9c9c"><svg width="14" height="14"><path d="M3,9.800 h6.500" stroke="#fff" stroke-width="2"/></svg></div>
<div class="abs" style="left:660px;top:454.3px;width:13.6px;height:13.7px;background:#9c9c9c"><svg width="14" height="14"><path d="M3,3 l7.500,7.500 M10.500,3 l-7.500,7.500" stroke="#fff" stroke-width="1.400"/></svg></div>
<div class="abs" style="left:9.700px;top:470.700px;width:662.300px;height:19.300px;background:#fff;border-top:1.900px solid #6a6a6a;border-left:1.600px solid #505050"></div>
<span class="t" id="t65" style="left:10.9px;top:474.23px;font-size:10.6px;color:#111;font-weight:normal;letter-spacing:0px;transform:scaleX(0.879);transform-origin:0 0;">CHA = CANH, CHB = CANL</span>
<div class="abs" style="left:658px;top:472.6px;width:14px;height:17.4px;background:#efeeea"><svg width="14" height="18"><path d="M4,7 l3,-3.500 l3,3.500 z M4,11.500 l3,3.500 l3,-3.500 z" fill="#7a7672"/></svg></div>
<div class="abs" style="left:7.500px;top:495px;width:685.500px;height:22.800px;background:linear-gradient(180deg,#f8f2e8,#f2e8da 50%,#ebdfcc);border:1px solid #a8948a;border-left-color:#6a5e58"></div>
<svg class="abs" style="left:11.500px;top:499.500px" width="15" height="15" viewBox="0 0 15 15"><circle cx="7.500" cy="7.200" r="6.500" fill="#2fa32c" stroke="#4a6a48" stroke-width="1"/><circle cx="7.500" cy="7.200" r="5" fill="none" stroke="#60c058" stroke-width="1"/><path d="M3.500,5.600 H7.500 V3.300 L11.800,7.200 L7.500,11.100 V8.800 H3.500 Z" fill="#f4f4f4" stroke="#888" stroke-width=".5"/></svg>
<div class="sel" style="left:29.5px;top:497px;width:20.5px;height:19px;"></div>
<svg class="abs" style="left:32.500px;top:499.500px" width="15" height="15" viewBox="0 0 15 15"><circle cx="7.500" cy="7.200" r="6.600" fill="#ee2a1c" stroke="#c03020" stroke-width=".6"/><ellipse cx="7.500" cy="4.300" rx="4.500" ry="2.500" fill="#ff6a58" opacity=".7"/><rect x="3.300" y="6" width="8.400" height="2.600" fill="#fff"/></svg>
<div class="sep" style="left:54px;top:499px;height:15px"></div>
<span class="t" id="t66" style="left:61.5px;top:500.55px;font-size:11.4px;color:#111;font-weight:normal;letter-spacing:0px;transform:scaleX(0.934);transform-origin:0 0;">Trigger</span>
<div class="combo" style="left:100px;top:498.5px;width:51px;height:16px;"></div><div class="dd" style="left:137.4px;top:499.6px;width:12px;height:13.9px;"><svg width="12" height="13.9"><path d="M2,4.45 l3,3 l3,-3" fill="none" stroke="#5b4a44" stroke-width="1.2"/></svg></div>
<span class="t" id="t67" style="left:102.5px;top:501.57px;font-size:10.2px;color:#000;font-weight:normal;letter-spacing:-0.223px;">Auto</span>
<svg class="abs" style="left:157px;top:499px" width="17" height="16" viewBox="0 0 17 16"><rect x="6.400" y="2" width="6" height="12.400" fill="#b4e4f6"/><path d="M1,11.600 H4.400 V5.600 H9.600 V11.600 H15.300" fill="none" stroke="#111" stroke-width="1.100"/><path d="M10.500,3 L12.500,.3 L15.300,1.200 L14.800,4.200 L11.500,4.800 Z" fill="#000"/><circle cx="9.600" cy="8.700" r="1.700" fill="#1cb030"/></svg>
<div class="sep" style="left:179px;top:499px;height:15px"></div>
<div class="combo" style="left:185px;top:498.5px;width:52px;height:16px;"></div><div class="dd" style="left:223.4px;top:499.6px;width:12px;height:13.9px;"><svg width="12" height="13.9"><path d="M2,4.45 l3,3 l3,-3" fill="none" stroke="#5b4a44" stroke-width="1.2"/></svg></div>
<span class="t" id="t68" style="left:187.9px;top:501.57px;font-size:10.2px;color:#000;font-weight:normal;letter-spacing:0px;">A</span>
<div class="sep" style="left:244px;top:499px;height:15px"></div>
<div class="sel" style="left:248px;top:497px;width:19.5px;height:18.5px;"></div>
<svg class="abs" style="left:250px;top:499px" width="16" height="15" viewBox="0 0 16 15"><path d="M7.800,2.800 V6 M7.800,9.500 V12.800" stroke="#2060ff" stroke-width="1.100"/><path d="M6.300,4.300 L7.800,6.300 L9.300,4.300 Z M6.300,11 L7.800,9 L9.300,11 Z" fill="#2060ff"/><path d="M1.800,12.500 H3.300 L12.500,3.200 H14.500" fill="none" stroke="#2a2a2a" stroke-width="1.050"/></svg>
<svg class="abs" style="left:271.500px;top:499px" width="16" height="15" viewBox="0 0 16 15"><path d="M7.800,2.800 V6 M7.800,9.500 V12.800" stroke="#2060ff" stroke-width="1.100"/><path d="M6.300,4.300 L7.800,6.300 L9.300,4.300 Z M6.300,11 L7.800,9 L9.300,11 Z" fill="#2060ff"/><path d="M1.500,3.200 H3.300 L12.300,12.500 H14" fill="none" stroke="#2a2a2a" stroke-width="1.050"/></svg>
<div class="sep" style="left:293.5px;top:499px;height:15px"></div>
<div class="combo" style="left:299.5px;top:498.5px;width:60.5px;height:16px;"></div>
<span class="t" id="t69" style="left:303.1px;top:501.57px;font-size:10.2px;color:#000;font-weight:normal;letter-spacing:0px;transform:scaleX(0.869);transform-origin:0 0;">1 V</span>
<div class="dd" style="left:346px;top:500px;width:12px;height:13px;"><svg width="12" height="13"><path d="M0,5.5 h12" stroke="#a89486" stroke-width="1"/><path d="M2.5,3.85 l2.500,-2.500 l2.500,2.500 M2.5,7.35 l2.500,2.500 l2.500,-2.500" fill="none" stroke="#6b5a54" stroke-width="1.100"/></svg></div>
<div class="sep" style="left:367px;top:499px;height:15px"></div>
<div class="combo" style="left:373px;top:498.5px;width:60.5px;height:16px;"></div>
<span class="t" id="t70" style="left:375.9px;top:501.57px;font-size:10.2px;color:#000;font-weight:normal;letter-spacing:-0.133px;">5.812%</span>
<div class="dd" style="left:419.6px;top:500px;width:12px;height:13px;"><svg width="12" height="13"><path d="M0,5.5 h12" stroke="#a89486" stroke-width="1"/><path d="M2.5,3.85 l2.500,-2.500 l2.500,2.500 M2.5,7.35 l2.500,2.500 l2.500,-2.500" fill="none" stroke="#6b5a54" stroke-width="1.100"/></svg></div>
<svg class="abs" style="left:439.500px;top:498.500px" width="17" height="16" viewBox="0 0 17 16"><path d="M1,3 H12 M1,1 V5 M9.500,.8 L12.500,3 L9.500,5.200" fill="none" stroke="#1850e8" stroke-width="1"/><path d="M1,9.500 C3,3.500 5.500,4 7.500,9 C9.500,14 12,14.500 14.500,9.500" fill="none" stroke="#111" stroke-width="1"/><circle cx="13.500" cy="7.500" r="1.800" fill="#f08020"/></svg>
<div class="combo" style="left:460px;top:498.5px;width:61.5px;height:16px;background:#f9f5ee;border-color:#d8c8bc"></div>
<span class="t" id="t71" style="left:462.9px;top:501.57px;font-size:10.2px;color:#b8aea6;font-weight:normal;letter-spacing:-0.247px;">0 s</span>
<div class="dd"  style="border-color:#cdbdb3;left:507.4px;top:500px;width:12.6px;height:13px;"><svg width="12.6" height="13"><path d="M0,5.5 h12.6" stroke="#a89486" stroke-width="1"/><path d="M2.8,3.85 l2.500,-2.500 l2.500,2.500 M2.8,7.35 l2.500,2.500 l2.500,-2.500" fill="none" stroke="#b4a8a0" stroke-width="1.100"/></svg></div>
<div class="sep" style="left:525px;top:499px;height:15px"></div>
<div class="abs" style="left:532px;top:499.5px;width:13px;height:13px;background:linear-gradient(180deg,#3cb038,#168a18);border:1px solid #0e6a10"><svg width="11" height="11"><path d="M2,5.500 h7 M5.500,2 v7" stroke="#fff" stroke-width="2"/></svg></div>
<div class="abs" style="left:553px;top:499.5px;width:13px;height:13px;background:linear-gradient(180deg,#c2dcb8,#aacfa0);border:1px solid #b4cfa8"><svg width="11" height="11"><path d="M2,6 h7" stroke="#f0f4ec" stroke-width="2"/></svg></div>
<div class="abs" style="left:574px;top:499.5px;width:13px;height:13px;background:linear-gradient(180deg,#c2dcb8,#aacfa0);border:1px solid #b4cfa8"><svg width="11" height="11"><path d="M1.500,8.500 L5.500,3.500 L9.500,8.500 Z" fill="#f0f4ec"/></svg></div>
<div class="abs" style="left:602.5px;top:500px;width:67.5px;height:13px;border:1px solid #a08a7c;border-radius:3px;background:linear-gradient(180deg,#fbf8f2,#efe6d8)"></div>
<div class="abs" style="left:604px;top:501.5px;width:23.5px;height:10px;background:linear-gradient(180deg,#6ab4f4,#2f8cf0 45%,#1a78e8)"></div>
<svg class="abs" style="left:684px;top:509px" width="9" height="9" viewBox="0 0 9 9"><g fill="#9a8a7e"><rect x="6" y="0" width="2" height="2"/><rect x="3" y="3" width="2" height="2"/><rect x="6" y="3" width="2" height="2"/><rect x="0" y="6" width="2" height="2"/><rect x="3" y="6" width="2" height="2"/><rect x="6" y="6" width="2" height="2"/></g></svg>
</div></body></html>
